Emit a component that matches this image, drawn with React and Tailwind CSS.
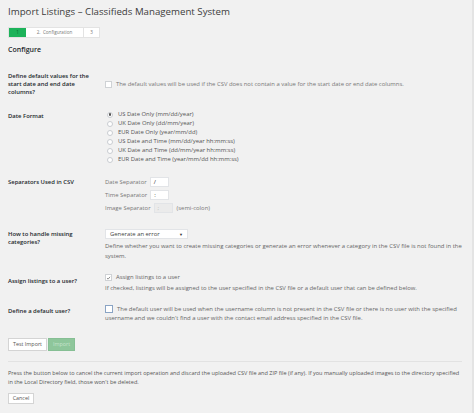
import React from 'react';

const label = 'w-[97px] shrink-0 pr-[12px] font-semibold text-[#23282d]';

function Radio({ checked, children }) {
  return (
    <div className="flex items-center h-[9px]">
      <span className="w-[6px] h-[6px] rounded-full bg-white border border-[#c9cdd1] flex items-center justify-center shrink-0 ml-[2px]">
        {checked && <span className="w-[2.5px] h-[2.5px] rounded-full bg-[#555]" />}
      </span>
      <span className="ml-[5px]">{children}</span>
    </div>
  );
}

function SepInput({ name, value, disabled, note }) {
  return (
    <div className="flex items-center h-[10px] whitespace-nowrap">
      <span>{name}</span>
      <span className={`ml-[3px] w-[19px] h-[10px] border border-[#e2e4e7] flex items-center pl-[3px] ${disabled ? 'bg-[#ebebeb] text-[#bbb]' : 'bg-white text-[#333]'}`}>
        {value}
      </span>
      {note && <span className="ml-[4px]">{note}</span>}
    </div>
  );
}

export default function App() {
  return (
    <div className="min-h-screen bg-[#f1f1f1] border-r-2 border-[#e4e4e4] text-[#555] font-['Open_Sans',sans-serif] text-[5.9px] leading-[9px] pl-2 pr-[10px]">
      <h1 className="pt-[5px] text-[9.7px] leading-[14px] text-[#3c3c3c]">
        Import Listings – Classifieds Management System
      </h1>

      {/* steps */}
      <div className="mt-[8px] flex h-[11px] w-fit border border-[#e3e3e3] bg-white text-[4.6px] text-[#777]">
        <div className="w-[17px] bg-[#1db35a] flex items-center justify-center text-[#0d6b33]">1</div>
        <div className="w-[57px] flex items-center justify-center">2.&nbsp; Configuration</div>
        <div className="w-[16px] border-l border-[#e3e3e3] flex items-center justify-center">3</div>
      </div>

      <h2 className="mt-[7px] text-[7px] leading-[10px] font-semibold text-[#23282d]">Configure</h2>

      {/* default values */}
      <div className="mt-[17px] flex">
        <div className={`${label} leading-[8px]`}>
          Define default values for the start date and end date columns?
        </div>
        <div className="flex items-center">
          <span className="w-[7px] h-[7px] bg-white border border-[#cfd2d5] shrink-0" />
          <span className="ml-[4px] text-[#777]">
            The default values will be used if the CSV does not contain a value for the start date or end date columns.
          </span>
        </div>
      </div>

      {/* date format */}
      <div className="mt-[14px] flex">
        <div className={`${label} pt-[2px]`}>Date Format</div>
        <div className="flex flex-col">
          <Radio checked>US Date Only (mm/dd/year)</Radio>
          <Radio>UK Date Only (dd/mm/year)</Radio>
          <Radio>EUR Date Only (year/mm/dd)</Radio>
          <Radio>US Date and Time (mm/dd/year hh:mm:ss)</Radio>
          <Radio>UK Date and Time (dd/mm/year hh:mm:ss)</Radio>
          <Radio>EUR Date and Time (year/mm/dd hh:mm:ss)</Radio>
        </div>
      </div>

      {/* separators */}
      <div className="mt-[13px] flex">
        <div className={`${label} leading-[10px]`}>Separators Used in CSV</div>
        <div className="flex flex-col gap-[3px] text-[#777]">
          <SepInput name="Date Separator" value="/" />
          <SepInput name="Time Separator" value=":" />
          <SepInput name="Image Separator" value=";" disabled note="(semi-colon)" />
        </div>
      </div>

      {/* categories */}
      <div className="mt-[16px] flex">
        <div className={`${label} leading-[8px] pt-[1px]`}>How to handle missing categories?</div>
        <div className="flex-1">
          <div className="w-[83px] h-[10px] bg-white border border-[#e2e4e7] flex items-center justify-between px-[4px] text-[#444]">
            <span>Generate an error</span>
            <span className="text-[4px] text-[#333]">▼</span>
          </div>
          <p className="mt-[3px] text-[5.95px] leading-[9.5px] text-[#666]">
            Define whether you want to create missing categories or generate an error whenever a category in the CSV file is not found in the system.
          </p>
        </div>
      </div>

      {/* assign */}
      <div className="mt-[12px] flex">
        <div className={`${label} pt-[4px]`}>Assign listings to a user?</div>
        <div className="flex-1 text-[#666]">
          <div className="flex items-center">
            <span className="w-[7px] h-[7px] bg-white border border-[#cfd2d5] shrink-0 flex items-center justify-center">
              <svg viewBox="0 0 10 10" className="w-[6px] h-[6px]">
                <path d="M2 5.2 L4.2 7.3 L8.2 2.6" fill="none" stroke="#555" strokeWidth="1.3" />
              </svg>
            </span>
            <span className="ml-[4px]">Assign listings to a user</span>
          </div>
          <p className="mt-[2px]">
            If checked, listings will be assigned to the user specified in the CSV file or a default user that can be defined below.
          </p>
        </div>
      </div>

      {/* default user */}
      <div className="mt-[12px] flex">
        <div className={`${label} pt-[2px]`}>Define a default user?</div>
        <p className="flex-1 text-[5.95px] text-[#666]">
          <span className="inline-block align-[-2px] w-[8px] h-[8px] bg-white border border-[#8aa4c4] mr-[4px]" />
          The default user will be used when the username column is not present in the CSV file or there is no user with the specified username and we couldn't find a user with the contact email address specified in the CSV file.
        </p>
      </div>

      {/* buttons */}
      <div className="mt-[15px] flex gap-[1px] text-[5.4px]">
        <button className="h-[13px] w-[39px] whitespace-nowrap bg-white border border-[#d4d4d4] text-[#555] leading-none">Test Import</button>
        <button className="h-[13px] w-[27px] whitespace-nowrap bg-[#8ec69b] border border-[#86bf94] text-[#c6e4cd] leading-none">Import</button>
      </div>

      <div className="mt-[10px] h-px bg-[#e2e2e2]" />

      <p className="mt-[7px] text-[5.55px] text-[#555]">
        Press the button below to cancel the current import operation and discard the uploaded CSV file and ZIP file (if any). If you manually uploaded images to the directory specified in the Local Directory field, those won't be deleted.
      </p>

      <button className="mt-[6px] h-[11px] w-[26px] text-[5.4px] bg-white border border-[#d4d4d4] text-[#555] leading-none">Cancel</button>
    </div>
  );
}
